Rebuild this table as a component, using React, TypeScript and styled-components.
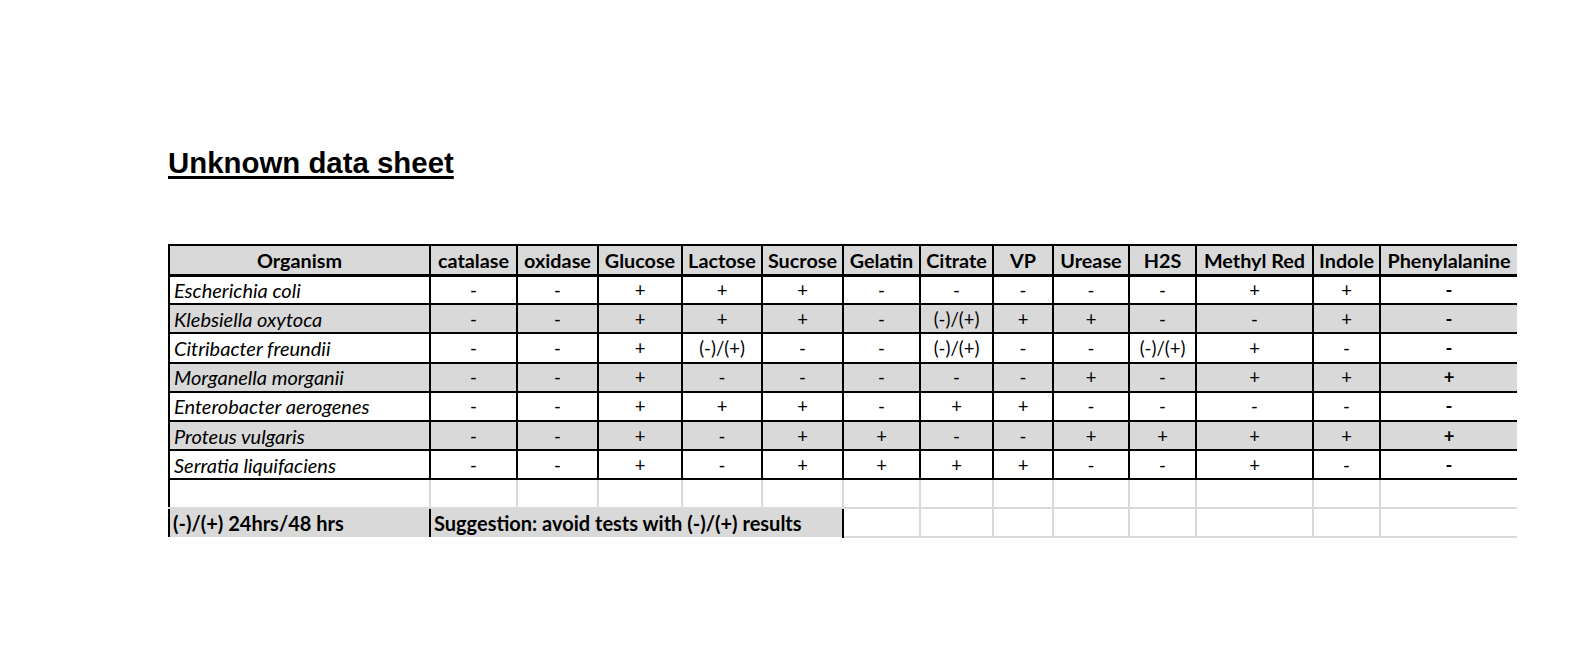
import styled, { createGlobalStyle } from 'styled-components';

type Result = string;

interface Organism {
  name: string;
  results: Result[];
}

const tests = [
  'catalase', 'oxidase', 'Glucose', 'Lactose', 'Sucrose', 'Gelatin', 'Citrate',
  'VP', 'Urease', 'H2S', 'Methyl Red', 'Indole', 'Phenylalanine',
];

const widths = [261, 87, 81, 84, 80, 81, 77, 73, 60, 76, 67, 117, 67, 137];

const V = '(-)/(+)';

const organisms: Organism[] = [
  { name: 'Escherichia coli', results: ['-', '-', '+', '+', '+', '-', '-', '-', '-', '-', '+', '+', '-'] },
  { name: 'Klebsiella oxytoca', results: ['-', '-', '+', '+', '+', '-', V, '+', '+', '-', '-', '+', '-'] },
  { name: 'Citribacter freundii', results: ['-', '-', '+', V, '-', '-', V, '-', '-', V, '+', '-', '-'] },
  { name: 'Morganella morganii', results: ['-', '-', '+', '-', '-', '-', '-', '-', '+', '-', '+', '+', '+'] },
  { name: 'Enterobacter aerogenes', results: ['-', '-', '+', '+', '+', '-', '+', '+', '-', '-', '-', '-', '-'] },
  { name: 'Proteus vulgaris', results: ['-', '-', '+', '-', '+', '+', '-', '-', '+', '+', '+', '+', '+'] },
  { name: 'Serratia liquifaciens', results: ['-', '-', '+', '-', '+', '+', '+', '+', '-', '-', '+', '-', '-'] },
];

const GlobalStyle = createGlobalStyle`
  html, body {
    margin: 0;
    padding: 0;
    background: #ffffff;
  }
`;

const Page = styled.div`
  width: 1570px;
  height: 654px;
  overflow: hidden;
  box-sizing: border-box;
  padding: 148px 0 0 168px;
`;

const Title = styled.h1`
  margin: 0 0 67px 0;
  font-family: "Liberation Sans", Arial, sans-serif;
  font-size: 29.4px;
  line-height: 29px;
  font-weight: bold;
  text-decoration: underline;
  text-decoration-thickness: 2.5px;
  text-underline-offset: 3px;
  color: #000;
`;

const Sheet = styled.table`
  border-collapse: collapse;
  table-layout: fixed;
  font-family: Lato, "Open Sans", sans-serif;
  font-size: 18.5px;
  color: #000;
`;

const HeadRow = styled.tr`
  height: 30px;
  background: #d9d9d9;
`;

const Row = styled.tr<{ $shaded?: boolean }>`
  height: 29.2px;
  background: ${p => (p.$shaded ? '#d9d9d9' : '#ffffff')};
`;

const HeadCell = styled.th<{ $last?: boolean }>`
  padding: 0 1px;
  font-size: 19.8px;
  font-weight: bold;
  text-align: center;
  white-space: nowrap;
  overflow: hidden;
  border-top: 2px solid #000;
  border-bottom: 3px solid #000;
  border-left: 2px solid #000;
  border-right: ${p => (p.$last ? 'none' : '2px solid #000')};
`;

const NameCell = styled.td`
  padding: 0 4px;
  font-size: 20px;
  font-style: italic;
  text-align: left;
  white-space: nowrap;
  border: 2px solid #000;
`;

const Cell = styled.td<{ $last?: boolean }>`
  padding: 0;
  text-align: center;
  white-space: nowrap;
  font-weight: ${p => (p.$last ? 'bold' : 'normal')};
  border: 2px solid #000;
  border-right: ${p => (p.$last ? 'none' : '2px solid #000')};
`;

const BlankCell = styled.td<{ $dark?: boolean }>`
  padding: 0;
  border: 2px solid #dadada;
  border-left: ${p => (p.$dark ? '2px solid #000' : '2px solid #dadada')};
  border-right: 2px solid #dadada;
  &:last-child {
    border-right: none;
  }
`;

const NoteCell = styled.td`
  padding: 0 3px;
  font-size: 20px;
  font-weight: bold;
  text-align: left;
  white-space: nowrap;
  background: #d9d9d9;
  border-top: 2px solid #000;
  border-left: 2px solid #000;
  border-right: 2px solid #000;
  border-bottom: none;
`;

const PlainRow = styled.tr`
  height: 29px;
`;

export default function App() {
  return (
    <>
      <GlobalStyle />
      <Page>
        <Title>Unknown data sheet</Title>
        <Sheet>
          <colgroup>
            {widths.map((w, i) => (
              <col key={i} style={{ width: w }} />
            ))}
          </colgroup>
          <thead>
            <HeadRow>
              <HeadCell>Organism</HeadCell>
              {tests.map((t, i) => (
                <HeadCell key={t} $last={i === tests.length - 1}>{t}</HeadCell>
              ))}
            </HeadRow>
          </thead>
          <tbody>
            {organisms.map((o, r) => (
              <Row key={o.name} $shaded={r % 2 === 1}>
                <NameCell>{o.name}</NameCell>
                {o.results.map((v, i) => (
                  <Cell key={i} $last={i === o.results.length - 1}>{v}</Cell>
                ))}
              </Row>
            ))}
            <PlainRow>
              <BlankCell $dark />
              {tests.map(t => (
                <BlankCell key={t} />
              ))}
            </PlainRow>
            <PlainRow>
              <NoteCell>(-)/(+) 24hrs/48 hrs</NoteCell>
              <NoteCell colSpan={5}>Suggestion: avoid tests with (-)/(+) results</NoteCell>
              {tests.slice(5).map(t => (
                <BlankCell key={t} />
              ))}
            </PlainRow>
          </tbody>
        </Sheet>
      </Page>
    </>
  );
}
